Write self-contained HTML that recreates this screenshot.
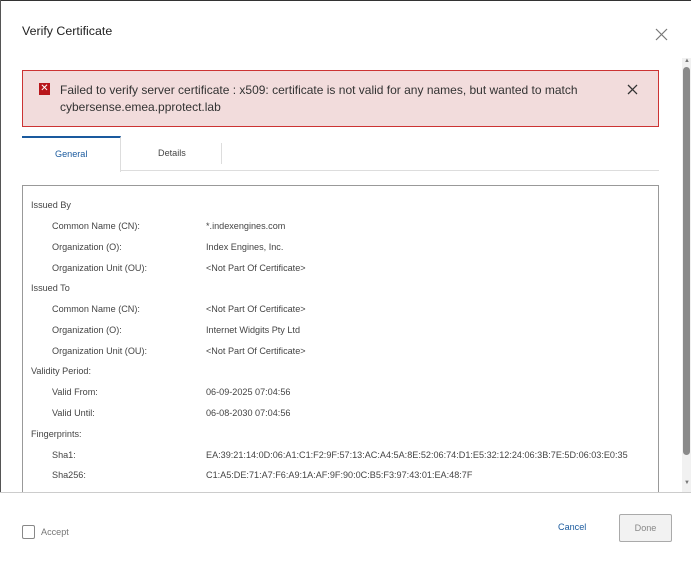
<!DOCTYPE html><html><head><style>
body{margin:0;width:691px;height:569px;overflow:hidden;background:#fff;font-family:"Liberation Sans",sans-serif;position:relative}
.a{position:absolute}
.t{font-size:9.1px;color:#444;white-space:nowrap}
</style></head><body>
<div class="a" style="left:0;top:0;width:691px;height:1px;background:#333"></div>
<div class="a" style="left:0;top:0;width:1px;height:569px;background:#555"></div>
<div class="a" style="left:22px;top:24px;font-size:12.4px;color:#222">Verify Certificate</div>
<svg class="a" style="left:655px;top:28px" width="13" height="13"><path d="M1 1L12 12M12 1L1 12" stroke="#777" stroke-width="1.2"/></svg>
<div class="a" style="left:682px;top:58px;width:9px;height:434px;background:#f1f1f1"></div>
<div class="a" style="left:683px;top:67px;width:7px;height:388px;background:#8a8a8a;border-radius:4px"></div>
<div class="a" style="left:684px;top:58px;font-size:6px;color:#777">▲</div>
<div class="a" style="left:684px;top:480px;font-size:6px;color:#777">▼</div>
<div class="a" style="left:22px;top:70px;width:635px;height:55px;background:#f2dcdc;border:1px solid #c33"></div>
<div class="a" style="left:39px;top:83px;width:11px;height:12px;background:#b8161b;color:#fff;font-size:10px;text-align:center;line-height:12px">✕</div>
<div class="a" style="left:60px;top:82px;font-size:12px;color:#333;line-height:17px">Failed to verify server certificate : x509: certificate is not valid for any names, but wanted to match<br>cybersense.emea.pprotect.lab</div>
<svg class="a" style="left:627px;top:84px" width="11" height="11"><path d="M1 1L10 10M10 1L1 10" stroke="#333" stroke-width="1.3"/></svg>
<div class="a" style="left:22px;top:170px;width:637px;height:1px;background:#ddd"></div>
<div class="a" style="left:22px;top:136px;width:98px;height:34px;border-top:2px solid #1a5a9e;border-right:1px solid #ddd;background:#fff"></div>
<div class="a" style="left:55px;top:149px;font-size:9.1px;color:#1a5a9e">General</div>
<div class="a" style="left:158px;top:148px;font-size:9.1px;color:#444">Details</div>
<div class="a" style="left:221px;top:143px;width:1px;height:21px;background:#ddd"></div>
<div class="a" style="left:22px;top:185px;width:635px;height:320px;border:1px solid #999;border-bottom:none"></div>
<div class="a t" style="left:31px;top:200px">Issued By</div>
<div class="a t" style="left:52px;top:221px">Common Name (CN):</div><div class="a t" style="left:206px;top:221px">*.indexengines.com</div>
<div class="a t" style="left:52px;top:242px">Organization (O):</div><div class="a t" style="left:206px;top:242px">Index Engines, Inc.</div>
<div class="a t" style="left:52px;top:263px">Organization Unit (OU):</div><div class="a t" style="left:206px;top:263px">&lt;Not Part Of Certificate&gt;</div>
<div class="a t" style="left:31px;top:283px">Issued To</div>
<div class="a t" style="left:52px;top:304px">Common Name (CN):</div><div class="a t" style="left:206px;top:304px">&lt;Not Part Of Certificate&gt;</div>
<div class="a t" style="left:52px;top:325px">Organization (O):</div><div class="a t" style="left:206px;top:325px">Internet Widgits Pty Ltd</div>
<div class="a t" style="left:52px;top:346px">Organization Unit (OU):</div><div class="a t" style="left:206px;top:346px">&lt;Not Part Of Certificate&gt;</div>
<div class="a t" style="left:31px;top:366px">Validity Period:</div>
<div class="a t" style="left:52px;top:387px">Valid From:</div><div class="a t" style="left:206px;top:387px">06-09-2025 07:04:56</div>
<div class="a t" style="left:52px;top:408px">Valid Until:</div><div class="a t" style="left:206px;top:408px">06-08-2030 07:04:56</div>
<div class="a t" style="left:31px;top:429px">Fingerprints:</div>
<div class="a t" style="left:52px;top:450px">Sha1:</div><div class="a t" style="left:206px;top:450px">EA:39:21:14:0D:06:A1:C1:F2:9F:57:13:AC:A4:5A:8E:52:06:74:D1:E5:32:12:24:06:3B:7E:5D:06:03:E0:35</div>
<div class="a t" style="left:52px;top:470px">Sha256:</div><div class="a t" style="left:206px;top:470px">C1:A5:DE:71:A7:F6:A9:1A:AF:9F:90:0C:B5:F3:97:43:01:EA:48:7F</div>
<div class="a" style="left:0;top:492px;width:691px;height:77px;background:#fff;border-top:1px solid #ccc"></div>
<div class="a" style="left:22px;top:525px;width:11px;height:12px;border:1px solid #888;border-radius:2px"></div>
<div class="a" style="left:41px;top:527px;font-size:9.1px;color:#777">Accept</div>
<div class="a" style="left:558px;top:522px;font-size:9.1px;color:#1a5a9e">Cancel</div>
<div class="a" style="left:619px;top:514px;width:51px;height:26px;border:1px solid #aaa;border-radius:2px;background:#f2f2f2;font-size:9.1px;color:#888;text-align:center;line-height:26px">Done</div>
</body></html>
